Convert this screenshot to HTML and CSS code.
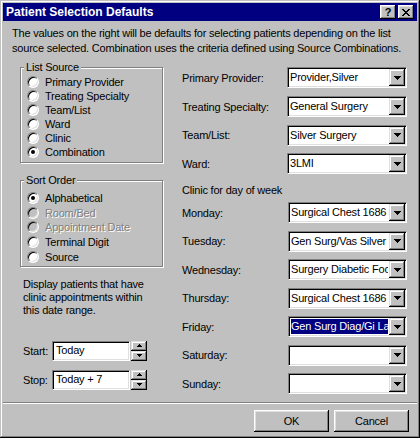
FILE: index.html
```html
<!DOCTYPE html>
<html lang="en">
<head>
  <meta charset="UTF-8">
  <title>Patient Selection Defaults</title>
  <link rel="stylesheet" href="styles.css">
</head>
<body>
  <div class="dlg">
    <div class="dlg-title">
      <span class="dlg-caption">Patient Selection Defaults</span>
      <div class="cap-btns">
        <span class="cap-btn help">?</span>
        <span class="cap-btn close">
          <svg width="8" height="7" viewBox="0 0 8 7"><path d="M0 0h2v1H0zM6 0h2v1H6zM1 1h2v1H1zM5 1h2v1H5zM2 2h4v1H2zM3 3h2v1H3zM2 4h4v1H2zM1 5h2v1H1zM5 5h2v1H5zM0 6h2v1H0zM6 6h2v1H6z"/></svg>
        </span>
      </div>
    </div>

    <div class="dlg-body">
      <p class="intro">The values on the right will be defaults for selecting patients depending on the list<br>source selected. Combination uses the criteria defined using Source Combinations.</p>

      <div class="cols">
        <!-- left side: list source / sort order / date range -->
        <div class="left-col">
          <div class="group list-src">
            <span class="group-title">List Source</span>
            <div class="radios">
              <div class="radio-row"><span class="radio"></span>Primary Provider</div>
              <div class="radio-row"><span class="radio"></span>Treating Specialty</div>
              <div class="radio-row"><span class="radio"></span>Team/List</div>
              <div class="radio-row"><span class="radio"></span>Ward</div>
              <div class="radio-row"><span class="radio"></span>Clinic</div>
              <div class="radio-row"><span class="radio on"></span>Combination</div>
            </div>
          </div>

          <div class="group sort-order">
            <span class="group-title">Sort Order</span>
            <div class="radios">
              <div class="radio-row"><span class="radio on"></span>Alphabetical</div>
              <div class="radio-row disabled"><span class="radio"></span>Room/Bed</div>
              <div class="radio-row disabled"><span class="radio"></span>Appointment Date</div>
              <div class="radio-row"><span class="radio"></span>Terminal Digit</div>
              <div class="radio-row"><span class="radio"></span>Source</div>
            </div>
          </div>

          <p class="range-note">Display patients that have<br>clinic appointments within<br>this date range.</p>

          <div class="date-row start">
            <span class="date-label">Start:</span>
            <div class="field">Today</div>
            <div class="spin">
              <span class="spin-btn"><svg width="5" height="3" viewBox="0 0 5 3"><path d="M2 0h1v1H2zM1 1h3v1H1zM0 2h5v1H0z"/></svg></span>
              <span class="spin-btn"><svg width="5" height="3" viewBox="0 0 5 3"><path d="M0 0h5v1H0zM1 1h3v1H1zM2 2h1v1H2z"/></svg></span>
            </div>
          </div>
          <div class="date-row stop">
            <span class="date-label">Stop:</span>
            <div class="field">Today + 7</div>
            <div class="spin">
              <span class="spin-btn"><svg width="5" height="3" viewBox="0 0 5 3"><path d="M2 0h1v1H2zM1 1h3v1H1zM0 2h5v1H0z"/></svg></span>
              <span class="spin-btn"><svg width="5" height="3" viewBox="0 0 5 3"><path d="M0 0h5v1H0zM1 1h3v1H1zM2 2h1v1H2z"/></svg></span>
            </div>
          </div>
        </div>

        <!-- right side: default values -->
        <div class="right-col">
          <div class="field-grid top-fields">
            <span class="f-label">Primary Provider:</span>
            <div class="combo"><span class="combo-val">Provider,Silver</span><span class="drop"><svg width="7" height="4" viewBox="0 0 7 4"><path d="M0 0h7v1H0zM1 1h5v1H1zM2 2h3v1H2zM3 3h1v1H3z"/></svg></span></div>
            <span class="f-label">Treating Specialty:</span>
            <div class="combo"><span class="combo-val">General Surgery</span><span class="drop"><svg width="7" height="4" viewBox="0 0 7 4"><path d="M0 0h7v1H0zM1 1h5v1H1zM2 2h3v1H2zM3 3h1v1H3z"/></svg></span></div>
            <span class="f-label">Team/List:</span>
            <div class="combo"><span class="combo-val">Silver Surgery</span><span class="drop"><svg width="7" height="4" viewBox="0 0 7 4"><path d="M0 0h7v1H0zM1 1h5v1H1zM2 2h3v1H2zM3 3h1v1H3z"/></svg></span></div>
            <span class="f-label">Ward:</span>
            <div class="combo"><span class="combo-val">3LMI</span><span class="drop"><svg width="7" height="4" viewBox="0 0 7 4"><path d="M0 0h7v1H0zM1 1h5v1H1zM2 2h3v1H2zM3 3h1v1H3z"/></svg></span></div>
          </div>

          <div class="clinic-label">Clinic for day of week</div>

          <div class="field-grid day-fields">
            <span class="f-label">Monday:</span>
            <div class="combo"><span class="combo-val">Surgical Chest 1686</span><span class="drop"><svg width="7" height="4" viewBox="0 0 7 4"><path d="M0 0h7v1H0zM1 1h5v1H1zM2 2h3v1H2zM3 3h1v1H3z"/></svg></span></div>
            <span class="f-label">Tuesday:</span>
            <div class="combo"><span class="combo-val">Gen Surg/Vas Silver</span><span class="drop"><svg width="7" height="4" viewBox="0 0 7 4"><path d="M0 0h7v1H0zM1 1h5v1H1zM2 2h3v1H2zM3 3h1v1H3z"/></svg></span></div>
            <span class="f-label">Wednesday:</span>
            <div class="combo"><span class="combo-val">Surgery Diabetic Foot</span><span class="drop"><svg width="7" height="4" viewBox="0 0 7 4"><path d="M0 0h7v1H0zM1 1h5v1H1zM2 2h3v1H2zM3 3h1v1H3z"/></svg></span></div>
            <span class="f-label">Thursday:</span>
            <div class="combo"><span class="combo-val">Surgical Chest 1686</span><span class="drop"><svg width="7" height="4" viewBox="0 0 7 4"><path d="M0 0h7v1H0zM1 1h5v1H1zM2 2h3v1H2zM3 3h1v1H3z"/></svg></span></div>
            <span class="f-label">Friday:</span>
            <div class="combo"><span class="combo-val selected">Gen Surg Diag/Gi Lab</span><span class="drop"><svg width="7" height="4" viewBox="0 0 7 4"><path d="M0 0h7v1H0zM1 1h5v1H1zM2 2h3v1H2zM3 3h1v1H3z"/></svg></span></div>
            <span class="f-label">Saturday:</span>
            <div class="combo"><span class="combo-val"></span><span class="drop"><svg width="7" height="4" viewBox="0 0 7 4"><path d="M0 0h7v1H0zM1 1h5v1H1zM2 2h3v1H2zM3 3h1v1H3z"/></svg></span></div>
            <span class="f-label">Sunday:</span>
            <div class="combo"><span class="combo-val"></span><span class="drop"><svg width="7" height="4" viewBox="0 0 7 4"><path d="M0 0h7v1H0zM1 1h5v1H1zM2 2h3v1H2zM3 3h1v1H3z"/></svg></span></div>
          </div>
        </div>
      </div>

      <div class="sep"></div>
      <div class="btn-bar">
        <span class="btn">OK</span>
        <span class="btn">Cancel</span>
      </div>
    </div>
  </div>
</body>
</html>
```

FILE: styles.css
```css
body { margin: 0; background: #c0c0c0; font-family: "Liberation Sans", Arial, sans-serif; font-size: 11px; letter-spacing: -0.2px; color: #000; }

/* window frame */
.dlg {
  width: 420px; height: 438px; box-sizing: border-box; padding: 3px; background: #c0c0c0;
  box-shadow: inset -1px -1px #000, inset 1px 1px #c0c0c0, inset -2px -2px #808080, inset 2px 2px #fff;
  display: flex; flex-direction: column;
}
.dlg-title { height: 18px; flex: none; background: #000080; color: #fff; display: flex; align-items: center; padding: 0 3px 0 3px; }
.dlg-caption { font-weight: 700; font-size: 12px; letter-spacing: 0; flex: 1; }
.cap-btns { display: flex; gap: 2px; }
.cap-btn {
  width: 16px; height: 14px; box-sizing: border-box; background: #c0c0c0; color: #000;
  box-shadow: inset -1px -1px #000, inset 1px 1px #fff, inset -2px -2px #808080, inset 2px 2px #dfdfdf;
  display: flex; align-items: center; justify-content: center;
}
.cap-btn.help { font-weight: 700; font-size: 11px; letter-spacing: 0; line-height: 14px; }
.cap-btn svg { display: block; }

.dlg-body { flex: 1; display: flex; flex-direction: column; }
.intro { margin: 5px 0 0 9px; line-height: 15px; white-space: nowrap; }

.cols { flex: 1; display: flex; padding-left: 17px; }
.left-col { width: 143px; display: flex; flex-direction: column; }

/* group boxes */
.group { border: 1px solid #808080; box-shadow: 1px 1px 0 #fff, inset 1px 1px 0 #fff; padding: 0 0 3px 6px; }
.group-title { display: block; width: max-content; margin: -7px 0 0 -3px; padding: 0 2px; line-height: 13px; background: #c0c0c0; }
.list-src { margin-top: 11px; }
.list-src .radios { margin-top: 1px; }
.list-src .radio-row { height: 14px; }
.sort-order { margin-top: 17px; padding-bottom: 2px; }
.sort-order .radios { margin-top: 4px; }
.sort-order .radio-row { height: 14.6px; }

.radio-row { display: flex; align-items: center; white-space: nowrap; }
.radio {
  width: 12px; height: 12px; box-sizing: border-box; flex: none; margin-right: 6px; border-radius: 50%;
  border: 1px solid; border-color: #808080 #fff #fff #808080; background: #fff;
  box-shadow: inset 1px 1px 0 #000, inset -1px -1px 0 #dfdfdf;
  display: flex; align-items: center; justify-content: center;
}
.radio.on::after { content: ""; width: 4px; height: 4px; border-radius: 50%; background: #000; }
.radio-row.disabled { color: #808080; text-shadow: 1px 1px 0 #fff; }
.radio-row.disabled .radio { background: #c0c0c0; }

.range-note { margin: 11px 0 0 3px; line-height: 13px; }

.date-row { display: flex; align-items: center; padding-left: 3px; height: 20px; }
.date-row.start { margin-top: 24px; }
.date-row.stop { margin-top: 9px; }
.date-label { width: 29px; }
.field {
  width: 78px; height: 20px; box-sizing: border-box; background: #fff; padding: 0 0 0 3px; line-height: 17px;
  border: 1px solid; border-color: #808080 #fff #fff #808080; box-shadow: inset 1px 1px #000, inset -1px -1px #dfdfdf;
}
.spin { margin-left: 1px; width: 16px; height: 20px; display: flex; flex-direction: column; }
.spin-btn {
  flex: 1; background: #c0c0c0; display: flex; align-items: center; justify-content: center;
  box-shadow: inset -1px -1px #000, inset 1px 1px #dfdfdf, inset -2px -2px #808080, inset 2px 2px #fff;
}
.spin-btn svg { display: block; }

/* right side */
.right-col { margin-left: 19px; }
.field-grid { display: grid; grid-template-columns: 105px 120px; align-items: center; }
.top-fields { padding-top: 7.67px; grid-auto-rows: 28.67px; }
.day-fields { margin-top: 1.4px; grid-auto-rows: 28.5px; }
.day-fields .combo { margin-left: 1px; }
.clinic-label { margin-top: 6px; line-height: 13px; }
.f-label { white-space: nowrap; }

.combo {
  height: 21px; box-sizing: border-box; background: #fff; padding: 1px; display: flex;
  border: 1px solid; border-color: #808080 #fff #fff #808080; box-shadow: inset 1px 1px #000, inset -1px -1px #dfdfdf;
}
.combo-val { flex: 1; min-width: 0; margin: 1px; line-height: 15px; white-space: nowrap; overflow: hidden; }
.combo-val.selected { background: #000080; color: #fff; }
.drop {
  width: 16px; flex: none; background: #c0c0c0; display: flex; align-items: center; justify-content: center;
  box-shadow: inset -1px -1px #000, inset 1px 1px #dfdfdf, inset -2px -2px #808080, inset 2px 2px #fff;
}
.drop svg { display: block; }

/* bottom */
.sep { height: 0; border-top: 1px solid #808080; border-bottom: 1px solid #fff; }
.btn-bar { display: flex; justify-content: flex-end; gap: 5px; padding: 6px 8px 3px 0; }
.btn {
  width: 75px; height: 22px; box-sizing: border-box; line-height: 22px; text-align: center; background: #c0c0c0;
  box-shadow: inset -1px -1px #000, inset 1px 1px #fff, inset -2px -2px #808080, inset 2px 2px #dfdfdf;
}
```
